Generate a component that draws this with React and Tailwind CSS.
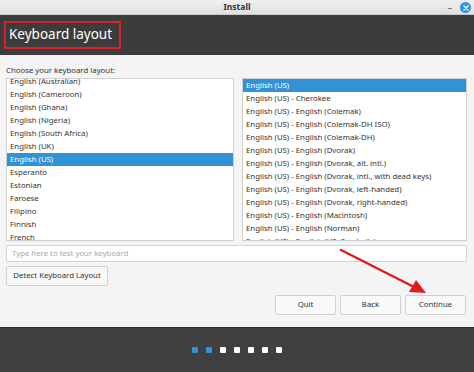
import React from "react";

const left = [
  "English (Australian)",
  "English (Cameroon)",
  "English (Ghana)",
  "English (Nigeria)",
  "English (South Africa)",
  "English (UK)",
  "English (US)",
  "Esperanto",
  "Estonian",
  "Faroese",
  "Filipino",
  "Finnish",
  "French",
];

const right = [
  "English (US)",
  "English (US) - Cherokee",
  "English (US) - English (Colemak)",
  "English (US) - English (Colemak-DH ISO)",
  "English (US) - English (Colemak-DH)",
  "English (US) - English (Dvorak)",
  "English (US) - English (Dvorak, alt. intl.)",
  "English (US) - English (Dvorak, intl., with dead keys)",
  "English (US) - English (Dvorak, left-handed)",
  "English (US) - English (Dvorak, right-handed)",
  "English (US) - English (Macintosh)",
  "English (US) - English (Norman)",
  "English (US) - English (US, Symbolic)",
];

function Row({ text, sel }) {
  return (
    <div
      className={
        "h-[13px] shrink-0 leading-[13px] px-[3px] whitespace-nowrap " +
        (sel ? "bg-[#3192d6] text-white" : "text-[#333]")
      }
    >
      {text}
    </div>
  );
}

export default function App() {
  return (
    <div
      className="relative w-[474px] h-[372px] overflow-hidden flex flex-col bg-[#f4f4f4] text-[7.8px]"
      style={{ fontFamily: "'Noto Sans', 'Open Sans', sans-serif" }}
    >
      {/* title bar */}
      <div className="relative h-[15px] shrink-0 bg-gradient-to-b from-[#efefef] to-[#e0e0e0] border-b border-[#c8c8c8] flex items-center justify-center">
        <span className="font-bold text-[8.5px] text-[#333]">Install</span>
        <span className="absolute right-[22px] top-[3px] text-[9px] text-[#555] leading-[9px]">–</span>
        <div className="absolute right-[3px] top-[2px] w-[11px] h-[11px] rounded-full bg-[#2f95dc] flex items-center justify-center">
          <svg width="6" height="6" viewBox="0 0 6 6">
            <path d="M1 1L5 5M5 1L1 5" stroke="white" strokeWidth="1.4" strokeLinecap="round" />
          </svg>
        </div>
      </div>

      {/* header */}
      <div className="h-[40px] shrink-0 bg-[#3c3c3c] flex items-center px-[4px]">
        <div className="h-[28px] w-[117px] border-2 border-[#d8232a] flex items-center pl-[3px]">
          <span className="text-white text-[13.5px] leading-none whitespace-nowrap">Keyboard layout</span>
        </div>
      </div>

      {/* content */}
      <div className="flex-1 flex flex-col pl-[6px] pr-[7px] pt-[8px]">
        <div className="h-[14px] leading-[14px] text-[#333]">Choose your keyboard layout:</div>
        <div className="flex gap-[8px] h-[163px] mt-[1px]">
          <div className="w-[228px] border border-[#cfcfcf] bg-white overflow-hidden flex flex-col">
            <div className="-mt-[4px] flex flex-col">
              {left.map((t) => (
                <Row key={t} text={t} sel={t === "English (US)"} />
              ))}
            </div>
          </div>
          <div className="flex-1 border border-[#cfcfcf] bg-white overflow-hidden flex flex-col">
            {right.map((t, i) => (
              <Row key={t} text={t} sel={i === 0} />
            ))}
          </div>
        </div>
        <div className="mt-[4px] h-[17px] border border-[#d4d4d4] bg-white rounded-[2px] flex items-center px-[5px] text-[#a8a8a8]">
          Type here to test your keyboard
        </div>
        <div className="mt-[4px] h-[20px] w-[102px] border border-[#d0d0d0] bg-[#f9f9f9] rounded-[2px] flex items-center justify-center text-[#333]">
          Detect Keyboard Layout
        </div>
        <div className="mt-[9px] flex justify-end gap-[4px] pr-[1px]">
          {["Quit", "Back", "Continue"].map((b) => (
            <div
              key={b}
              className="w-[61px] h-[20px] border border-[#d0d0d0] bg-[#f9f9f9] rounded-[2px] flex items-center justify-center text-[#333]"
            >
              {b}
            </div>
          ))}
        </div>
      </div>

      {/* bottom */}
      <div className="h-[45px] shrink-0 bg-[#3f3f3f] border-t border-[#2e2e2e] flex items-center justify-center gap-[8px]">
        {[0, 1, 2, 3, 4, 5, 6].map((i) => (
          <div
            key={i}
            className={"w-[6px] h-[6px] rounded-[1px] " + (i < 2 ? "bg-[#3192d6]" : "bg-white")}
          />
        ))}
      </div>

      {/* red arrow annotation */}
      <svg className="absolute left-0 top-0 pointer-events-none" width="474" height="372">
        <line x1="341" y1="250" x2="414" y2="287" stroke="#e01b1b" strokeWidth="2.5" strokeLinecap="round" />
        <polygon points="426,293 409,292 416,280" fill="#e01b1b" />
      </svg>
    </div>
  );
}
